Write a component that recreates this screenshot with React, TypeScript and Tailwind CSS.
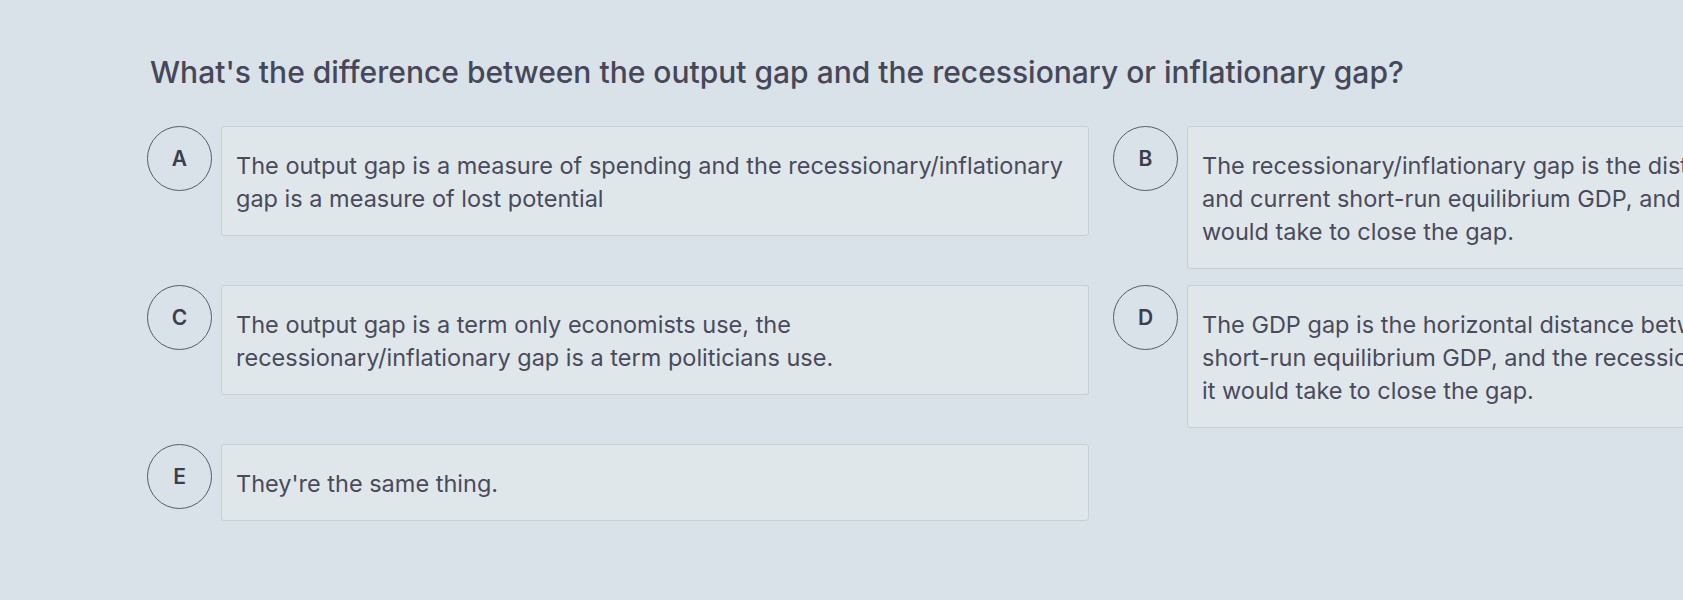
import React from "react";

type Opt = { letter: string; lines: string[] };

const options: Opt[] = [
  {
    letter: "A",
    lines: [
      "The output gap is a measure of spending and the recessionary/inflationary",
      "gap is a measure of lost potential",
    ],
  },
  {
    letter: "B",
    lines: [
      "The recessionary/inflationary gap is the distance between potential GDP",
      "and current short-run equilibrium GDP, and the output gap is the spending it",
      "would take to close the gap.",
    ],
  },
  {
    letter: "C",
    lines: [
      "The output gap is a term only economists use, the",
      "recessionary/inflationary gap is a term politicians use.",
    ],
  },
  {
    letter: "D",
    lines: [
      "The GDP gap is the horizontal distance between potential GDP and current",
      "short-run equilibrium GDP, and the recessionary/inflationary gap is the spending",
      "it would take to close the gap.",
    ],
  },
  { letter: "E", lines: ["They're the same thing."] },
];

function Option({ o }: { o: Opt }) {
  return (
    <div className="flex items-start gap-[9px]">
      <div className="w-[65px] h-[65px] shrink-0 rounded-full border-[1.5px] border-[#5b5b6b] flex items-center justify-center text-[21px] font-semibold text-[#3d3d4c]">
        {o.letter}
      </div>
      <div className="w-[868px] shrink-0 rounded-[3px] border border-[#c6d0d6] bg-[#e0e7eb] pl-[14px] pr-4 pt-[22px] pb-[20px] text-[23.5px] leading-[33px] text-[#4a4a5c] overflow-hidden">
        {o.lines.map((l, i) => (
          <div key={i} className="whitespace-nowrap">
            {l}
          </div>
        ))}
      </div>
    </div>
  );
}

export default function App() {
  return (
    <div
      className="w-[1683px] h-[600px] overflow-hidden bg-[#d9e2e8]"
      style={{ fontFamily: "Inter, 'Liberation Sans', sans-serif" }}
    >
      <div className="pl-[147px] pt-[54px]">
        <h1 className="pl-[3px] text-[30px] leading-9 font-medium text-[#474759] whitespace-nowrap">
          What's the difference between the output gap and the recessionary or inflationary gap?
        </h1>
        <div className="mt-[36px] grid grid-cols-[942px_942px] gap-x-[24px] gap-y-[16px] items-start w-max">
          {options.map((o) => (
            <Option key={o.letter} o={o} />
          ))}
        </div>
      </div>
    </div>
  );
}
